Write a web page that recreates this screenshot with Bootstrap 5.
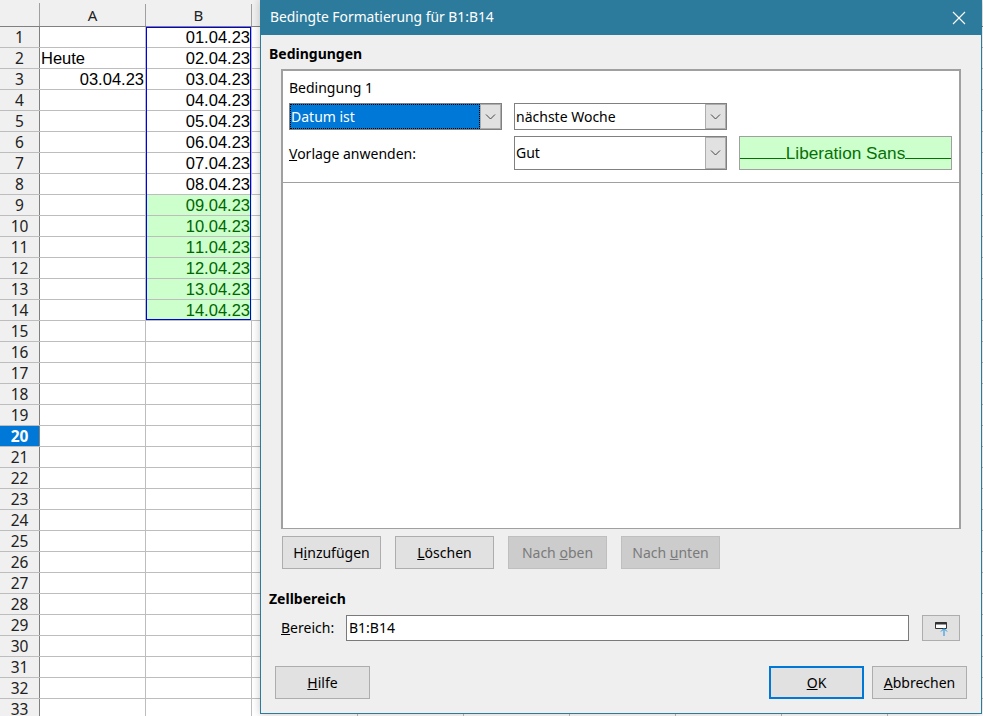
<!DOCTYPE html>
<html lang="de">
<head>
<meta charset="utf-8">
<title>Bedingte Formatierung</title>
<link href="https://cdn.jsdelivr.net/npm/bootstrap@5.3.0/dist/css/bootstrap.min.css" rel="stylesheet">
<style>
html,body{height:716px;overflow:hidden;background:#fff}
body{font-family:"Noto Sans","Open Sans",sans-serif;font-size:14px;color:#000;position:relative}
.sheet{width:983px;height:716px;overflow:hidden;position:relative}
.sheet-top{height:27px;background:#f0f0f0;border-bottom:1px solid #808080;display:flex;align-items:flex-end}
.hd-corner{width:40px;height:23px;border-right:1px solid #a0a0a0}
.hd-col{width:106px;height:22px;border-right:1px solid #a0a0a0;text-align:center;line-height:22px;font-size:15px;color:#222}
.sheet-row{height:21px;display:flex;border-bottom:1px solid #bdbdbd}
.row-num{width:40px;background:#f0f0f0;border-right:1px solid #808080;text-align:center;line-height:20px;font-size:15.5px;color:#222}
.row-num.active-row{background:#0078d7;color:#fff;font-weight:700}
.cell-box{width:106px;border-right:1px solid #bdbdbd;font-family:"Liberation Sans",sans-serif;font-size:16.5px;font-kerning:none;line-height:21px;padding:0 1px;text-align:right;white-space:nowrap}
.cell-text{text-align:left}
.cell-good{background:#ccffcc;color:#006600;border-right-color:#ccffcc}
.cell-rest{flex:1;background:repeating-linear-gradient(90deg,transparent 0 105px,#bdbdbd 105px 106px)}
.selection{position:absolute;left:146px;top:27px;width:105px;height:293px;border:1px solid #0000e6;pointer-events:none}
.dlg{position:absolute;left:260px;top:0;width:722px;height:714px;background:#efefef;border:1px solid #2d7b9c;border-top:0;box-shadow:0 0 8px rgba(0,0,0,.22)}
.dlg-title{height:35px;background:#2d7b9c;color:#fff;padding:0 0 0 10px;font-size:13.85px;margin:0 -1px;display:flex;align-items:center;justify-content:space-between}
.dlg-close{width:46px;height:35px;display:flex;align-items:center;justify-content:center;background:none;border:0;padding:0}
.group-title{font-weight:700;font-size:14px;line-height:19px;margin:0}
.cond-head{margin:9px 0 0 8px}
.cond-frame{margin:6px 20px 0 20px;height:460px;background:#fff;border:1px solid #a0a0a0;border-top-width:2px;border-left-width:2px;border-right-width:2px}
.cond-entry{height:112px;border-bottom:1px solid #a0a0a0;padding:7px 6px 0 6px}
.cond-name{line-height:20px;height:20px}
.pick-row{display:flex;align-items:center;gap:12px}
.pick-first{margin-top:5px;height:27px}
.pick-second{margin-top:6px;height:34px}
.pick-label{width:213px}
.pick{width:213px;height:100%;display:flex;background:#fff;border:1px solid #808080;line-height:1}
.pick-val{flex:1;display:flex;align-items:center;padding-left:1px;margin:0}
.pick-val.chosen{background:#0078d7;color:#fff;outline:1px dotted #000;outline-offset:-1px}
.pick-btn{width:21px;background:#e1e1e1;border:1px solid #adadad;display:flex;align-items:center;justify-content:center}
.style-preview{width:213px;height:100%;padding-top:2px;background:#ccffcc;border:1px solid #a0a0a0;color:#067006;font-family:"Liberation Sans",sans-serif;font-size:17.2px;display:flex;align-items:center;white-space:nowrap}
.style-rule{flex:1;border-bottom:1px solid #067006;margin-top:8px}
.action-row{display:flex;gap:14px;margin:7px 0 0 21px}
.act-btn{height:33px;width:99px;background:#e1e1e1;border:1px solid #adadad;border-radius:0;font-size:14px;padding:0;color:#000;line-height:1}
.act-btn:disabled{background:#ccc;border-color:#bfbfbf;color:#7a7a7a;opacity:1}
.range-head{margin:20px 0 0 8px}
.range-row{display:flex;align-items:center;margin:6px 21px 0 20px;height:27px}
.range-label{width:65px;margin:0}
.range-input{flex:1;height:26px;border:1px solid #7a7a7a;background:#fff;padding:0 2px;font-size:14px;border-radius:0;outline:0;font-family:inherit}
.range-btn{width:38px;height:26px;margin-left:13px;background:#e1e1e1;border:1px solid #adadad;padding:0;display:flex;align-items:center;justify-content:center}
.foot-row{display:flex;margin:25px 14px 0 14px;align-items:center}
.foot-btn{width:95px;height:33px;background:#e1e1e1;border:1px solid #adadad;font-size:14px;padding:0;color:#000;border-radius:0}
.foot-btn.is-default{border:2px solid #0078d7}
</style>
</head>
<body>
<div class="sheet">
  <div class="sheet-top"><div class="hd-corner"></div><div class="hd-col">A</div><div class="hd-col">B</div><div class="hd-col flex-grow-1 border-0"></div></div>
  <div class="sheet-row"><div class="row-num">1</div><div class="cell-box"></div><div class="cell-box">01.04.23</div><div class="cell-rest"></div></div>
  <div class="sheet-row"><div class="row-num">2</div><div class="cell-box cell-text">Heute</div><div class="cell-box">02.04.23</div><div class="cell-rest"></div></div>
  <div class="sheet-row"><div class="row-num">3</div><div class="cell-box">03.04.23</div><div class="cell-box">03.04.23</div><div class="cell-rest"></div></div>
  <div class="sheet-row"><div class="row-num">4</div><div class="cell-box"></div><div class="cell-box">04.04.23</div><div class="cell-rest"></div></div>
  <div class="sheet-row"><div class="row-num">5</div><div class="cell-box"></div><div class="cell-box">05.04.23</div><div class="cell-rest"></div></div>
  <div class="sheet-row"><div class="row-num">6</div><div class="cell-box"></div><div class="cell-box">06.04.23</div><div class="cell-rest"></div></div>
  <div class="sheet-row"><div class="row-num">7</div><div class="cell-box"></div><div class="cell-box">07.04.23</div><div class="cell-rest"></div></div>
  <div class="sheet-row"><div class="row-num">8</div><div class="cell-box"></div><div class="cell-box">08.04.23</div><div class="cell-rest"></div></div>
  <div class="sheet-row"><div class="row-num">9</div><div class="cell-box"></div><div class="cell-box cell-good">09.04.23</div><div class="cell-rest"></div></div>
  <div class="sheet-row"><div class="row-num">10</div><div class="cell-box"></div><div class="cell-box cell-good">10.04.23</div><div class="cell-rest"></div></div>
  <div class="sheet-row"><div class="row-num">11</div><div class="cell-box"></div><div class="cell-box cell-good">11.04.23</div><div class="cell-rest"></div></div>
  <div class="sheet-row"><div class="row-num">12</div><div class="cell-box"></div><div class="cell-box cell-good">12.04.23</div><div class="cell-rest"></div></div>
  <div class="sheet-row"><div class="row-num">13</div><div class="cell-box"></div><div class="cell-box cell-good">13.04.23</div><div class="cell-rest"></div></div>
  <div class="sheet-row"><div class="row-num">14</div><div class="cell-box"></div><div class="cell-box cell-good">14.04.23</div><div class="cell-rest"></div></div>
  <div class="sheet-row"><div class="row-num">15</div><div class="cell-box"></div><div class="cell-box"></div><div class="cell-rest"></div></div>
  <div class="sheet-row"><div class="row-num">16</div><div class="cell-box"></div><div class="cell-box"></div><div class="cell-rest"></div></div>
  <div class="sheet-row"><div class="row-num">17</div><div class="cell-box"></div><div class="cell-box"></div><div class="cell-rest"></div></div>
  <div class="sheet-row"><div class="row-num">18</div><div class="cell-box"></div><div class="cell-box"></div><div class="cell-rest"></div></div>
  <div class="sheet-row"><div class="row-num">19</div><div class="cell-box"></div><div class="cell-box"></div><div class="cell-rest"></div></div>
  <div class="sheet-row"><div class="row-num active-row">20</div><div class="cell-box"></div><div class="cell-box"></div><div class="cell-rest"></div></div>
  <div class="sheet-row"><div class="row-num">21</div><div class="cell-box"></div><div class="cell-box"></div><div class="cell-rest"></div></div>
  <div class="sheet-row"><div class="row-num">22</div><div class="cell-box"></div><div class="cell-box"></div><div class="cell-rest"></div></div>
  <div class="sheet-row"><div class="row-num">23</div><div class="cell-box"></div><div class="cell-box"></div><div class="cell-rest"></div></div>
  <div class="sheet-row"><div class="row-num">24</div><div class="cell-box"></div><div class="cell-box"></div><div class="cell-rest"></div></div>
  <div class="sheet-row"><div class="row-num">25</div><div class="cell-box"></div><div class="cell-box"></div><div class="cell-rest"></div></div>
  <div class="sheet-row"><div class="row-num">26</div><div class="cell-box"></div><div class="cell-box"></div><div class="cell-rest"></div></div>
  <div class="sheet-row"><div class="row-num">27</div><div class="cell-box"></div><div class="cell-box"></div><div class="cell-rest"></div></div>
  <div class="sheet-row"><div class="row-num">28</div><div class="cell-box"></div><div class="cell-box"></div><div class="cell-rest"></div></div>
  <div class="sheet-row"><div class="row-num">29</div><div class="cell-box"></div><div class="cell-box"></div><div class="cell-rest"></div></div>
  <div class="sheet-row"><div class="row-num">30</div><div class="cell-box"></div><div class="cell-box"></div><div class="cell-rest"></div></div>
  <div class="sheet-row"><div class="row-num">31</div><div class="cell-box"></div><div class="cell-box"></div><div class="cell-rest"></div></div>
  <div class="sheet-row"><div class="row-num">32</div><div class="cell-box"></div><div class="cell-box"></div><div class="cell-rest"></div></div>
  <div class="sheet-row"><div class="row-num">33</div><div class="cell-box"></div><div class="cell-box"></div><div class="cell-rest"></div></div>
  <div class="selection"></div>
</div>

<div class="dlg" role="dialog">
  <div class="dlg-title">
    <span>Bedingte Formatierung für B1:B14</span>
    <button class="dlg-close" type="button" aria-label="Schließen"><svg width="14" height="14" viewBox="0 0 14 14"><path d="M1 1l12 12M13 1L1 13" stroke="#fff" stroke-width="1.1" fill="none"/></svg></button>
  </div>
  <h6 class="group-title cond-head">Bedingungen</h6>
  <div class="cond-frame">
    <div class="cond-entry">
      <div class="cond-name">Bedingung 1</div>
      <div class="pick-row pick-first">
        <div class="pick"><div class="pick-val chosen">Datum ist</div><div class="pick-btn"><svg width="11" height="6" viewBox="0 0 11 6"><path d="M1 .5l4.5 4.5L10 .5" stroke="#444" fill="none"/></svg></div></div>
        <div class="pick"><div class="pick-val">nächste Woche</div><div class="pick-btn"><svg width="11" height="6" viewBox="0 0 11 6"><path d="M1 .5l4.5 4.5L10 .5" stroke="#444" fill="none"/></svg></div></div>
      </div>
      <div class="pick-row pick-second">
        <div class="pick-label"><u>V</u>orlage anwenden:</div>
        <div class="pick"><div class="pick-val">Gut</div><div class="pick-btn"><svg width="11" height="6" viewBox="0 0 11 6"><path d="M1 .5l4.5 4.5L10 .5" stroke="#444" fill="none"/></svg></div></div>
        <div class="style-preview"><span class="style-rule"></span><span>Liberation Sans</span><span class="style-rule"></span></div>
      </div>
    </div>
  </div>
  <div class="action-row">
    <button class="btn act-btn" type="button">H<u>i</u>nzufügen</button>
    <button class="btn act-btn" type="button"><u>L</u>öschen</button>
    <button class="btn act-btn" type="button" disabled>Nach <u>o</u>ben</button>
    <button class="btn act-btn" type="button" disabled>Nach <u>u</u>nten</button>
  </div>
  <h6 class="group-title range-head">Zellbereich</h6>
  <div class="range-row">
    <label class="range-label" for="rng"><u>B</u>ereich:</label>
    <input class="range-input" id="rng" type="text" value="B1:B14">
    <button class="range-btn" type="button" aria-label="Verkleinern"><svg width="14" height="16" viewBox="0 0 14 16"><path d="M1.5 2.5h11v6h-11z" fill="#fff" stroke="#333"/><path d="M1 3.5h12" stroke="#333" stroke-width="2"/><path d="M10 16V8.5M7 11.5l3-3 3 3" stroke="#1b8fe0" fill="none"/></svg></button>
  </div>
  <div class="foot-row">
    <button class="btn foot-btn" type="button"><u>H</u>ilfe</button>
    <button class="btn foot-btn is-default ms-auto" type="button"><u>O</u>K</button>
    <button class="btn foot-btn ms-2" type="button"><u>A</u>bbrechen</button>
  </div>
</div>
<script src="https://cdn.jsdelivr.net/npm/bootstrap@5.3.0/dist/js/bootstrap.bundle.min.js"></script>
</body>
</html>
